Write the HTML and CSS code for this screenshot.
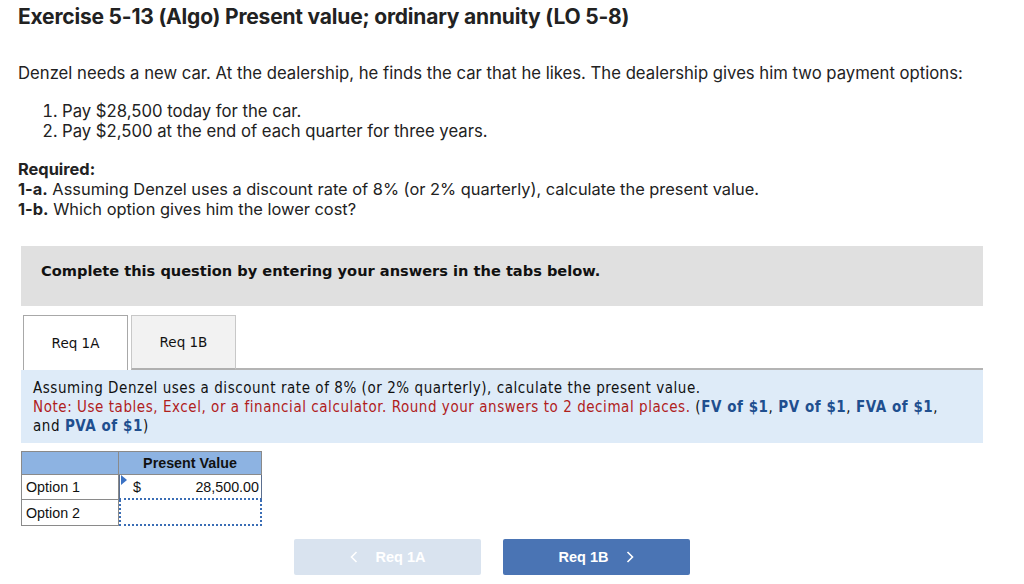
FILE: index.html
```html
<!DOCTYPE html>
<html>
<head>
<meta charset="utf-8">
<link rel="stylesheet" href="styles.css">
</head>
<body>
<div class="page">
  <h1 class="title">Exercise 5-13 (Algo) Present value; ordinary annuity (LO 5-8)</h1>
  <p class="intro">Denzel needs a new car. At the dealership, he finds the car that he likes. The dealership gives him two payment options:</p>
  <ol class="opts">
    <li>Pay $28,500 today for the car.</li>
    <li>Pay $2,500 at the end of each quarter for three years.</li>
  </ol>
  <div class="req">
    <div class="req-head">Required:</div>
    <div><b>1-a.</b> Assuming Denzel uses a discount rate of 8% (or 2% quarterly), calculate the present value.</div>
    <div><b>1-b.</b> Which option gives him the lower cost?</div>
  </div>
</div>
<div class="banner">Complete this question by entering your answers in the tabs below.</div>
<div class="tabs">
  <div class="tab active">Req 1A</div>
  <div class="tab">Req 1B</div>
  <div class="tab-fill"></div>
</div>
<div class="info">
  <div>Assuming Denzel uses a discount rate of 8% (or 2% quarterly), calculate the present value.</div>
  <div><span class="note">Note: Use tables, Excel, or a financial calculator. Round your answers to 2 decimal places.</span> (<b class="lnk">FV of $1</b>, <b class="lnk">PV of $1</b>, <b class="lnk">FVA of $1</b>,</div>
  <div>and <b class="lnk">PVA of $1</b>)</div>
</div>
<div class="grid">
  <div class="hcell blank"></div>
  <div class="hcell">Present Value</div>
  <div class="lcell">Option 1</div>
  <div class="vcell filled"><span class="tri"></span><span>$</span><span>28,500.00</span></div>
  <div class="lcell">Option 2</div>
  <div class="vcell empty"></div>
</div>
<div class="nav">
  <div class="btn prev"><svg class="chev" width="8" height="12" viewBox="0 0 8 12"><path d="M6.5 1 L1.5 6 L6.5 11" fill="none" stroke="#fff" stroke-width="1.6"/></svg>Req 1A</div>
  <div class="btn next">Req 1B<svg class="chev r" width="8" height="12" viewBox="0 0 8 12"><path d="M1.5 1 L6.5 6 L1.5 11" fill="none" stroke="#fff" stroke-width="1.6"/></svg></div>
</div>
</body>
</html>
```
FILE: styles.css
```css
html, body { margin: 0; padding: 0; background: #fff; }
body { font-family: "Inter", "Open Sans", sans-serif; color: #222; }
.page { padding: 0 0 0 18px; }
.title { font-size: 21px; font-weight: 700; line-height: 24px; margin: 5px 0 0 0; color: #222; letter-spacing: -0.2px; }
.intro { font-size: 16.7px; line-height: 20px; margin: 34px 0 0 0; }
.opts { margin: 18px 0 0 0; padding-left: 44px; font-size: 16.7px; line-height: 20px; }
.req { margin-top: 18px; font-size: 16.4px; line-height: 20px; }
.req b { font-weight: 700; }
.req-head { font-weight: 700; }
.banner { margin: 27px 41px 0 21px; background: #e0e0e0; height: 60px; box-sizing: border-box; padding: 16px 0 0 20px; font-family: "DejaVu Sans", Verdana, sans-serif; font-weight: 700; font-size: 14.6px; color: #111; }
.tabs { display: flex; margin: 9px 41px 0 23px; height: 55px; align-items: stretch; }
.tab { width: 105px; box-sizing: border-box; border: 1px solid #c8c8c8; border-bottom: none; font-family: "DejaVu Sans", Verdana, sans-serif; font-size: 13.5px; color: #111; display: flex; align-items: center; justify-content: center; }
.tab.active { background: #fff; border-color: #a8a8a8; }
.tab:not(.active) { background: #f2f2f2; margin-left: 3px; border-bottom: 2px solid #b0b0b0; }
.tab-fill { flex: 1; border-bottom: 2px solid #b4b4b4; }
.info { margin: 0 41px 0 21px; background: #deebf8; padding: 9px 12px 7px 12px; font-family: "DejaVu Sans Condensed", "DejaVu Sans", sans-serif; font-size: 15px; letter-spacing: 0.55px; line-height: 19px; color: #111; }
.note { color: #b0201c; }
.lnk { color: #1f4f8f; }
.grid { display: grid; grid-template-columns: 98px 143px; grid-template-rows: 24px 25px 26px; margin: 8px 0 0 21px; width: 241px; font-family: "Liberation Sans", Arial, sans-serif; font-size: 14.3px; }
.hcell { background: #8db3e2; border: 1px solid #8a8a8a; border-left: none; display: flex; align-items: center; justify-content: center; font-weight: 700; color: #111; box-sizing: border-box; }
.hcell.blank { border-left: 1px solid #8a8a8a; }
.lcell { border: 1px solid #8a8a8a; border-top: none; display: flex; align-items: center; padding-left: 4px; box-sizing: border-box; color: #111; }
.vcell { box-sizing: border-box; position: relative; display: flex; align-items: center; justify-content: space-between; padding: 0 2px 0 13px; color: #111; }
.vcell.filled { border: 1px solid #5b6f8f; border-top: none; border-bottom: 2px dotted #3a6db5; }
.vcell.empty { border: 2px dotted #3a6db5; border-top: none; }
.tri { position: absolute; left: 1px; top: 0; width: 0; height: 0; border-top: 5px solid transparent; border-bottom: 5px solid transparent; border-left: 6px solid #3b72c4; }
.nav { display: flex; margin: 13px 0 0 294px; gap: 22px; }
.btn { width: 187px; height: 36px; border-radius: 2px; display: flex; align-items: center; justify-content: center; font-family: "Liberation Sans", Arial, sans-serif; font-weight: 700; font-size: 14.5px; color: #fff; }
.btn.prev { background: #d9e3ef; }
.btn.next { background: #4a74b4; }
.chev { margin-right: 18px; }
.chev.r { margin-right: 0; margin-left: 18px; }
```
